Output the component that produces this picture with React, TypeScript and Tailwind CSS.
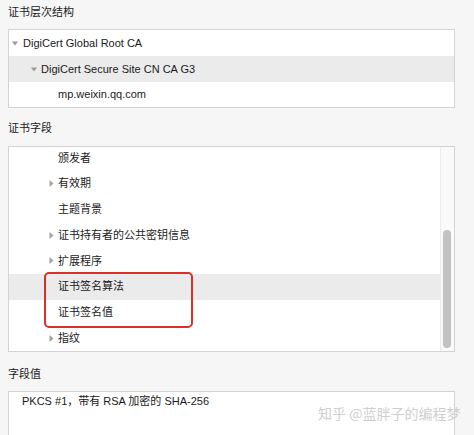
const FONT = "font-['Liberation_Sans','Noto_Sans_CJK_SC',sans-serif]";

function DownArrow() {
  return (
    <svg width="6" height="5" viewBox="0 0 6 5" className="shrink-0">
      <path d="M0 0.5 L6 0.5 L3 4.5 Z" fill="#9a9a9a" />
    </svg>
  );
}

function RightArrow() {
  return (
    <svg width="5" height="7" viewBox="0 0 5 7" className="shrink-0">
      <path d="M0.5 0 L4.5 3.5 L0.5 7 Z" fill="#a3a3a3" />
    </svg>
  );
}

const fields: { label: string; expandable?: boolean; selected?: boolean }[] = [
  { label: "颁发者" },
  { label: "有效期", expandable: true },
  { label: "主题背景" },
  { label: "证书持有者的公共密钥信息", expandable: true },
  { label: "扩展程序", expandable: true },
  { label: "证书签名算法", selected: true },
  { label: "证书签名值" },
  { label: "指纹", expandable: true },
];

export default function App() {
  return (
    <div
      className={`${FONT} relative h-[435px] w-[474px] overflow-hidden bg-[#f6f6f6] px-[8px] text-[11px] text-[#1a1a1a]`}
    >
      {/* 证书层次结构 */}
      <div className="h-[29px] pt-[4px] leading-[16px]">证书层次结构</div>
      <div className="w-[447px] border border-[#d3d3d3] bg-white">
        <div className="flex h-[26px] items-center pl-[3px]">
          <DownArrow />
          <span className="ml-[5px]">DigiCert Global Root CA</span>
        </div>
        <div className="flex h-[26px] items-center bg-[#ebebeb] pl-[22px]">
          <DownArrow />
          <span className="ml-[4px]">DigiCert Secure Site CN CA G3</span>
        </div>
        <div className="flex h-[25px] items-center pl-[49px]">mp.weixin.qq.com</div>
      </div>

      {/* 证书字段 */}
      <div className="h-[38px] pt-[12px] leading-[16px]">证书字段</div>
      <div className="flex h-[206px] w-[447px] overflow-hidden border border-[#d3d3d3] bg-white">
        <div className="relative flex-1 overflow-hidden">
          <div className="-mt-[2px]">
            {fields.map((f) => (
              <div
                key={f.label}
                className={`flex h-[25.75px] items-center ${f.selected ? "bg-[#ebebeb]" : ""} ${
                  f.expandable ? "pl-[40px]" : "pl-[49px]"
                }`}
              >
                {f.expandable && <RightArrow />}
                <span className={f.expandable ? "ml-[4px]" : ""}>{f.label}</span>
              </div>
            ))}
          </div>
          <div className="absolute left-[35px] top-[125px] h-[56px] w-[149px] rounded-[5px] border-2 border-[#dc2f2a]" />
        </div>
        <div className="w-[14px] border-l border-[#ececec] bg-[#fafafa] pl-[2px] pt-[83px]">
          <div className="h-[118px] w-[8px] rounded-full bg-[#c2c2c2]" />
        </div>
      </div>

      {/* 字段值 */}
      <div className="h-[39px] pt-[14px] leading-[16px]">字段值</div>
      <div className="h-[60px] w-[447px] border border-[#d3d3d3] bg-white pl-[13px] pt-[1px] leading-[16px]">
        PKCS #1，带有 RSA 加密的 SHA-256
      </div>

      <div className="absolute left-[318px] top-[404px] font-['Noto_Sans_CJK_SC',sans-serif] text-[14px] leading-[18px] text-[#cfcfcf]">
        知乎 @蓝胖子的编程梦
      </div>
    </div>
  );
}
